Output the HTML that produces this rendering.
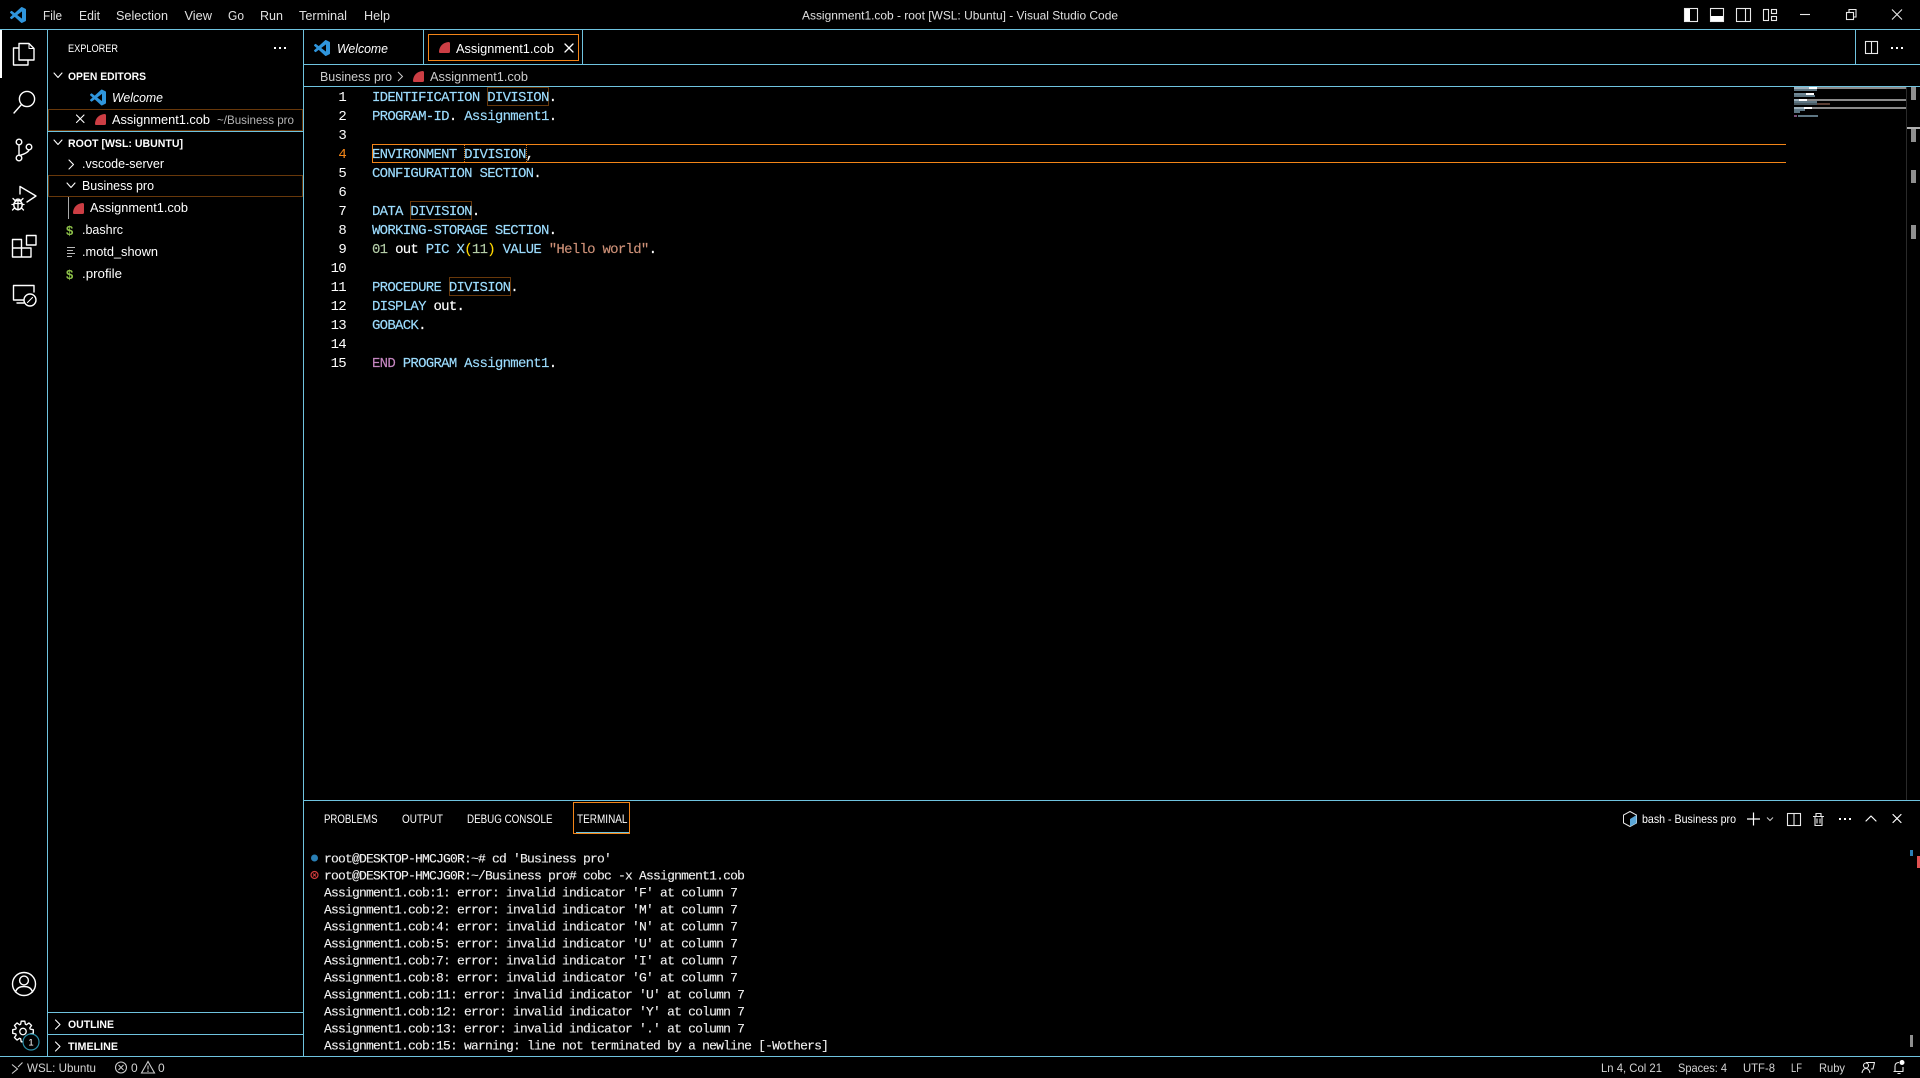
<!DOCTYPE html>
<html lang="en"><head><meta charset="utf-8"><title>Assignment1.cob - root [WSL: Ubuntu] - Visual Studio Code</title>
<style>
html,body{margin:0;padding:0;background:#000;width:1920px;height:1078px;overflow:hidden}
svg{display:block;position:absolute;left:0;top:0}
text{font-family:"Liberation Sans",sans-serif;font-size:13px;fill:#fff;white-space:pre}
.menu{fill:#e0e0e0}
.b{font-weight:700;font-size:11px}
.h{font-size:11px}
.i{font-style:italic}
.d{font-size:12px;fill:#b4b4b4}
.g{fill:#ccc}
.s{font-size:12px;fill:#d4d4d4}
.p{font-size:11.5px}
.m{font-family:"Liberation Mono",monospace;font-size:14px;letter-spacing:-.72px;fill:#9cdcfe;stroke:#9cdcfe;stroke-width:.15px}
.n{font-family:"Liberation Mono",monospace;font-size:14px;letter-spacing:-.72px;fill:#fff;text-anchor:end}
.t{font-family:"Liberation Mono",monospace;font-size:13px;letter-spacing:-.8px;fill:#f0f0f0;stroke:#f0f0f0;stroke-width:.12px}
.w{fill:#fff;stroke:#fff}.o{fill:#b5cea8;stroke:#b5cea8}.y{fill:#ffd700;stroke:#ffd700}.r{fill:#ce9178;stroke:#ce9178}.k{fill:#c586c0;stroke:#c586c0}
.ln{stroke:#6fc3df;stroke-width:1;fill:none}
.oc{stroke:#f38518;stroke-width:1;fill:none}
.dt{stroke:#f38518;stroke-width:1;fill:none;stroke-dasharray:1 1;stroke-opacity:.85}
.ic{stroke:#fff;stroke-width:1.4;fill:none;stroke-linejoin:round;stroke-linecap:round}
.ic2{stroke:#e8e8e8;stroke-width:1.1;fill:none}
</style></head><body>
<svg width="1920" height="1078" viewBox="0 0 1920 1078" xmlns="http://www.w3.org/2000/svg">
<defs>
<path id="vs" d="M23.15 2.587L18.21.21a1.494 1.494 0 0 0-1.705.29l-9.46 8.63-4.12-3.128a.999.999 0 0 0-1.276.057L.327 7.261A1 1 0 0 0 .326 8.74L3.899 12 .326 15.26a1 1 0 0 0 .001 1.479L1.65 17.94a.999.999 0 0 0 1.276.057l4.12-3.128 9.46 8.63a1.492 1.492 0 0 0 1.704.29l4.942-2.377A1.5 1.5 0 0 0 24 20.06V3.939a1.5 1.5 0 0 0-.85-1.352zm-5.146 14.861L10.826 12l7.178-5.448v10.896z" fill="#2f95dc"/>
<path id="cob" d="M0 10 C0 4.5 4 0.5 9.5 0 Q11 0 11 1.5 V9.5 Q11 11 9.5 11 H1 Q0 11 0 10Z" fill="#cc3e44"/>
</defs>

<!-- Title bar -->
<use href="#vs" transform="translate(10 7) scale(.667)"/>
<text class="menu" x="43" y="20" textLength="19" lengthAdjust="spacingAndGlyphs">File</text>
<text class="menu" x="79" y="20" textLength="21" lengthAdjust="spacingAndGlyphs">Edit</text>
<text class="menu" x="116" y="20" textLength="52" lengthAdjust="spacingAndGlyphs">Selection</text>
<text class="menu" x="184.5" y="20" textLength="27.5" lengthAdjust="spacingAndGlyphs">View</text>
<text class="menu" x="228" y="20" textLength="16" lengthAdjust="spacingAndGlyphs">Go</text>
<text class="menu" x="260" y="20" textLength="23" lengthAdjust="spacingAndGlyphs">Run</text>
<text class="menu" x="299" y="20" textLength="48" lengthAdjust="spacingAndGlyphs">Terminal</text>
<text class="menu" x="364" y="20" textLength="26" lengthAdjust="spacingAndGlyphs">Help</text>
<text class="menu" x="802" y="19.5" style="font-size:12px" textLength="316" lengthAdjust="spacingAndGlyphs">Assignment1.cob - root [WSL: Ubuntu] - Visual Studio Code</text>
<!-- layout controls -->
<g class="ic2">
<rect x="1684.5" y="8.5" width="13" height="13"/><rect x="1685" y="9" width="5" height="12" fill="#fff" stroke="none"/>
<rect x="1710.5" y="8.5" width="13" height="13"/><rect x="1711" y="16" width="12" height="5" fill="#fff" stroke="none"/>
<rect x="1736.5" y="8.5" width="14" height="13"/><path d="M1745.5 8.5V21.5"/>
<rect x="1763.5" y="9.5" width="5" height="11"/><rect x="1771.5" y="9.5" width="5" height="4"/><rect x="1771.5" y="16.5" width="5" height="4"/>
<path d="M1800 14.5H1810"/>
<rect x="1846.5" y="12.5" width="7" height="7"/><path d="M1849 12V9.5H1856V17H1854"/>
<path d="M1892 9.5L1902 19.5M1902 9.5L1892 19.5"/>
</g>

<!-- Main lines -->
<g class="ln">
<path d="M0 29.5H1920"/>
<path d="M47.5 30V1056"/>
<path d="M303.5 30V1056"/>
<path d="M304 64.5H1920"/>
<path d="M304 86.5H1920"/>
<path d="M423.5 30V64"/>
<path d="M582.5 30V64"/>
<path d="M1855.5 30V64"/>
<path d="M48 131.5H303"/>
<path d="M48 1012.5H303"/>
<path d="M48 1034.5H303"/>
<path d="M304 800.5H1920"/>
<path d="M0 1056.5H1920"/>
</g>

<!-- Activity bar -->
<rect x="0" y="30" width="2" height="48" fill="#fff"/>
<g class="ic">
<path d="M19 48H13.5V65H28V60H19V43.5H29L34 48.5V60H28"/><path d="M29 43.5V48.5H34" stroke-width="1"/>
<circle cx="27" cy="99" r="7.6"/><path d="M21.5 104.5L14 113"/>
<circle cx="19" cy="142" r="2.8"/><circle cx="29" cy="147" r="2.8"/><circle cx="19" cy="158" r="2.8"/><path d="M19 145V155M29 150Q28 153 19.5 155.5"/>
<path d="M20 194V186.5L36 196L27 202"/>
<path d="M15 200.5Q18 197.5 21 200.5" stroke-width="1.2"/><ellipse cx="18" cy="205" rx="4.2" ry="4.6" stroke-width="1.5"/><path d="M13 198.5L15 200.5M23 198.5L21 200.5M12 204.5H14M22 204.5H24M12.5 210L14.5 208M23.5 210L21.5 208M18 201V210M14 203.5H22" stroke-width="1.3"/>
<rect x="26.5" y="235.5" width="9.5" height="9.5"/><path d="M12.5 239.5H21.5V257M12.5 239.5V257H31V248H12.5"/>
<path d="M24 300H13.5V285.5H34V292M17 303H24"/><circle cx="30" cy="300" r="6"/><path d="M27.5 302.5L32.5 297.5" stroke-width="1.1"/>
<circle cx="24" cy="984" r="11.5"/><circle cx="24" cy="980.5" r="4.4"/><path d="M15.5 992Q17 986.5 24 986.5T32.5 992"/>
<g transform="translate(23 1031.5) scale(.95)">
<path d="M-2.47 -7.61L-1.91 -10.83H1.91L2.47 -7.61L3.63 -7.13L6.31 -9.01L9.01 -6.31L7.13 -3.63L7.61 -2.47L10.83 -1.91V1.91L7.61 2.47L7.13 3.63L9.01 6.31L6.31 9.01L3.63 7.13L2.47 7.61L1.91 10.83H-1.91L-2.47 7.61L-3.63 7.13L-6.31 9.01L-9.01 6.31L-7.13 3.63L-7.61 2.47L-10.83 1.91V-1.91L-7.61 -2.47L-7.13 -3.63L-9.01 -6.31L-6.31 -9.01L-3.63 -7.13Z"/>
<circle r="3.4"/></g>
</g>
<circle cx="31" cy="1042" r="8" fill="#000" stroke="#2b8fa8" stroke-width="1.2"/>
<text x="31" y="1045.5" text-anchor="middle" style="font-size:9.5px">1</text>

<!-- Explorer -->
<text class="h" x="68" y="52" textLength="50" lengthAdjust="spacingAndGlyphs">EXPLORER</text>
<g fill="#fff"><rect x="274" y="47" width="2" height="2"/><rect x="279" y="47" width="2" height="2"/><rect x="284" y="47" width="2" height="2"/></g>
<g class="ic" style="stroke-width:1.1">
<path d="M54 73L58 77.5L62 73"/>
<path d="M54 140L58 144.5L62 140"/>
<path d="M69 160L73.5 164.5L69 169"/>
<path d="M67 183L71 187.5L75 183"/>
<path d="M76.5 115L84 122.5M84 115L76.5 122.5"/>
<path d="M55.5 1020L60 1024.5L55.5 1029"/>
<path d="M55.5 1042L60 1046.5L55.5 1051"/>
</g>
<text class="b" x="68" y="80" textLength="78" lengthAdjust="spacingAndGlyphs">OPEN EDITORS</text>
<use href="#vs" transform="translate(90 89.5) scale(.667)"/>
<text class="i" x="112" y="102" textLength="51" lengthAdjust="spacingAndGlyphs">Welcome</text>
<rect class="dt" x="48.5" y="109.5" width="254" height="21"/>
<use href="#cob" x="95" y="114"/>
<text x="112" y="124" textLength="98" lengthAdjust="spacingAndGlyphs">Assignment1.cob</text>
<text class="d" x="217" y="124" textLength="77" lengthAdjust="spacingAndGlyphs">~/Business pro</text>
<text class="b" x="68" y="147" textLength="115" lengthAdjust="spacingAndGlyphs">ROOT [WSL: UBUNTU]</text>
<text x="82" y="168" textLength="82" lengthAdjust="spacingAndGlyphs">.vscode-server</text>
<rect class="dt" x="48.5" y="175.5" width="254" height="21"/>
<text x="82" y="190" textLength="72" lengthAdjust="spacingAndGlyphs">Business pro</text>
<path d="M68.5 197V219" stroke="#aaa" fill="none"/>
<use href="#cob" x="73" y="203"/>
<text x="90" y="212" textLength="98" lengthAdjust="spacingAndGlyphs">Assignment1.cob</text>
<text x="66" y="235" style="fill:#8dc149;font-weight:700;font-size:13px">$</text>
<text x="82" y="234" textLength="41" lengthAdjust="spacingAndGlyphs">.bashrc</text>
<path d="M67 247.5H75M67 250.5H73M67 253.5H75M67 256.5H72" stroke="#bbb" stroke-width="1.1"/>
<text x="82" y="256" textLength="76" lengthAdjust="spacingAndGlyphs">.motd_shown</text>
<text x="66" y="279" style="fill:#8dc149;font-weight:700;font-size:13px">$</text>
<text x="82" y="278" textLength="40" lengthAdjust="spacingAndGlyphs">.profile</text>
<text class="b" x="68" y="1028" textLength="46" lengthAdjust="spacingAndGlyphs">OUTLINE</text>
<text class="b" x="68" y="1050" textLength="50" lengthAdjust="spacingAndGlyphs">TIMELINE</text>

<!-- Tabs -->
<use href="#vs" transform="translate(314 40) scale(.667)"/>
<text class="i" x="337" y="53" textLength="51" lengthAdjust="spacingAndGlyphs">Welcome</text>
<rect class="oc" x="428.5" y="34.5" width="150" height="26"/>
<use href="#cob" x="439" y="42"/>
<text x="456" y="53" textLength="98" lengthAdjust="spacingAndGlyphs">Assignment1.cob</text>
<path class="ic" d="M565 44L573 52M573 44L565 52" style="stroke-width:1.3"/>
<g class="ic2"><rect x="1865.5" y="41.5" width="12" height="12"/><path d="M1871.5 41.5V53.5"/></g>
<g fill="#fff"><rect x="1891" y="47" width="2" height="2"/><rect x="1896" y="47" width="2" height="2"/><rect x="1901" y="47" width="2" height="2"/></g>

<!-- Breadcrumbs -->
<text class="g" x="320" y="81" textLength="72" lengthAdjust="spacingAndGlyphs">Business pro</text>
<path d="M398 72L402.5 76.5L398 81" stroke="#ccc" fill="none"/>
<use href="#cob" x="413" y="71"/>
<text class="g" x="430" y="81" textLength="98" lengthAdjust="spacingAndGlyphs">Assignment1.cob</text>

<!-- Editor gutter -->
<g>
<text class="n" x="346" y="101">1</text><text class="n" x="346" y="120">2</text><text class="n" x="346" y="139">3</text>
<text class="n" x="346" y="158" style="fill:#f38518">4</text><text class="n" x="346" y="177">5</text><text class="n" x="346" y="196">6</text>
<text class="n" x="346" y="215">7</text><text class="n" x="346" y="234">8</text><text class="n" x="346" y="253">9</text>
<text class="n" x="346" y="272">10</text><text class="n" x="346" y="291">11</text><text class="n" x="346" y="310">12</text>
<text class="n" x="346" y="329">13</text><text class="n" x="346" y="348">14</text><text class="n" x="346" y="367">15</text>
</g>
<!-- Highlights -->
<path class="oc" d="M1786 144.5H372.5V162.5H1786"/>
<rect class="dt" x="487.5" y="87.5" width="61" height="18"/>
<path class="dt" d="M464.5 145V162M526.5 145V162"/>
<rect class="dt" x="410.5" y="201.5" width="61" height="18"/>
<rect class="dt" x="449.5" y="277.5" width="61" height="18"/>
<!-- Code -->
<text class="m" x="372" y="101">IDENTIFICATION DIVISION<tspan class="w">.</tspan></text>
<text class="m" x="372" y="120">PROGRAM-ID<tspan class="w">.</tspan> Assignment1<tspan class="w">.</tspan></text>
<text class="m" x="372" y="158">ENVIRONMENT DIVISION<tspan class="w">,</tspan></text>
<text class="m" x="372" y="177">CONFIGURATION SECTION<tspan class="w">.</tspan></text>
<text class="m" x="372" y="215">DATA DIVISION<tspan class="w">.</tspan></text>
<text class="m" x="372" y="234">WORKING-STORAGE SECTION<tspan class="w">.</tspan></text>
<text class="m" x="372" y="253"><tspan class="o">01</tspan> <tspan class="w">out</tspan> PIC X<tspan class="y">(</tspan><tspan class="o">11</tspan><tspan class="y">)</tspan> VALUE <tspan class="r">"Hello world"</tspan><tspan class="w">.</tspan></text>
<text class="m" x="372" y="291">PROCEDURE DIVISION<tspan class="w">.</tspan></text>
<text class="m" x="372" y="310">DISPLAY <tspan class="w">out.</tspan></text>
<text class="m" x="372" y="329">GOBACK<tspan class="w">.</tspan></text>
<text class="m" x="372" y="367"><tspan class="k">END</tspan> PROGRAM Assignment1<tspan class="w">.</tspan></text>

<!-- Minimap -->
<g>
<rect x="1817" y="87" width="89" height="2" fill="#8a8a8a"/><rect x="1809" y="87" width="8" height="2" fill="#fff"/><rect x="1794" y="87" width="15" height="2" fill="#9db0bb"/>
<rect x="1794" y="89" width="23" height="2" fill="#5e7683"/>
<rect x="1794" y="93" width="12" height="2" fill="#6f8794"/><rect x="1806" y="93" width="8" height="2" fill="#fff"/>
<rect x="1794" y="95" width="21" height="2" fill="#5e7683"/>
<rect x="1807" y="99" width="99" height="2" fill="#8a8a8a"/><rect x="1799" y="99" width="8" height="2" fill="#fff"/><rect x="1794" y="99" width="5" height="2" fill="#9db0bb"/>
<rect x="1794" y="101" width="23" height="2" fill="#5e7683"/>
<rect x="1794" y="103" width="23" height="2" fill="#4a5a62"/><rect x="1817" y="103" width="13" height="2" fill="#5c3f34"/>
<rect x="1812" y="107" width="94" height="2" fill="#8a8a8a"/><rect x="1804" y="107" width="8" height="2" fill="#fff"/><rect x="1794" y="107" width="10" height="2" fill="#9db0bb"/>
<rect x="1794" y="109" width="11" height="2" fill="#5e7683"/><rect x="1794" y="111" width="6" height="2" fill="#5e7683"/>
<rect x="1794" y="115" width="3" height="2" fill="#7a4f7a"/><rect x="1798" y="115" width="20" height="2" fill="#5e7683"/>
</g>
<!-- Scrollbar -->
<path d="M1906.5 87V800" stroke="#2a2a2a"/>
<rect x="1911" y="87" width="5" height="13" fill="#8f8f8f"/>
<rect x="1907" y="127" width="13" height="2" fill="#b0b0b0"/>
<rect x="1911" y="129" width="5" height="13" fill="#8f8f8f"/>
<rect x="1911" y="170" width="5" height="13" fill="#8f8f8f"/>
<rect x="1911" y="225" width="5" height="14" fill="#8f8f8f"/>

<!-- Panel tabs -->
<text class="p" x="324" y="823" textLength="53.5" lengthAdjust="spacingAndGlyphs">PROBLEMS</text>
<text class="p" x="402" y="823" textLength="41" lengthAdjust="spacingAndGlyphs">OUTPUT</text>
<text class="p" x="467" y="823" textLength="85.5" lengthAdjust="spacingAndGlyphs">DEBUG CONSOLE</text>
<text class="p" x="577" y="823" textLength="50.5" lengthAdjust="spacingAndGlyphs">TERMINAL</text>
<rect class="oc" x="573.5" y="802.5" width="56" height="31"/>
<path d="M576 832.5H629" stroke="#6fc3df"/>
<!-- Panel actions -->
<path d="M1630 811.5L1636.5 815V823L1630 826.5L1623.5 823V815Z" fill="none" stroke="#e8e8e8"/><path d="M1630 819V826.5L1636.5 823V815Z" fill="#5aa5d5"/>
<text x="1642" y="823" style="font-size:12px" textLength="94" lengthAdjust="spacingAndGlyphs">bash - Business pro</text>
<path d="M1747 819H1760M1753.5 812.5V825.5" stroke="#fff" stroke-width="1.2" fill="none"/>
<path d="M1767 817.5L1770 820.5L1773 817.5" stroke="#ccc" fill="none"/>
<g class="ic2">
<rect x="1787.5" y="813.5" width="13" height="12"/><path d="M1794 813.5V825.5"/>
<path d="M1813 816.5H1824M1815 816.5V825.5H1822V816.5M1816 816V813.5H1821V816M1817 818.5V823.5M1820 818.5V823.5"/>
</g>
<g fill="#fff"><rect x="1839" y="818" width="2" height="2"/><rect x="1844" y="818" width="2" height="2"/><rect x="1849" y="818" width="2" height="2"/></g>
<path class="ic" d="M1866 821L1871 816L1876 821M1893 814.5L1901 822.5M1901 814.5L1893 822.5" style="stroke-width:1.2"/>

<!-- Terminal -->
<circle cx="314.5" cy="858" r="3.5" fill="#2a7fb5"/>
<circle cx="314.5" cy="875" r="3.5" fill="none" stroke="#d13b3b" stroke-width="1.2"/><path d="M313 873.5L316 876.5M316 873.5L313 876.5" stroke="#d13b3b"/>
<text class="t" x="324" y="862.5">root@DESKTOP-HMCJG0R:~# cd 'Business pro'</text>
<text class="t" x="324" y="879.5">root@DESKTOP-HMCJG0R:~/Business pro# cobc -x Assignment1.cob</text>
<text class="t" x="324" y="896.5">Assignment1.cob:1: error: invalid indicator 'F' at column 7</text>
<text class="t" x="324" y="913.5">Assignment1.cob:2: error: invalid indicator 'M' at column 7</text>
<text class="t" x="324" y="930.5">Assignment1.cob:4: error: invalid indicator 'N' at column 7</text>
<text class="t" x="324" y="947.5">Assignment1.cob:5: error: invalid indicator 'U' at column 7</text>
<text class="t" x="324" y="964.5">Assignment1.cob:7: error: invalid indicator 'I' at column 7</text>
<text class="t" x="324" y="981.5">Assignment1.cob:8: error: invalid indicator 'G' at column 7</text>
<text class="t" x="324" y="998.5">Assignment1.cob:11: error: invalid indicator 'U' at column 7</text>
<text class="t" x="324" y="1015.5">Assignment1.cob:12: error: invalid indicator 'Y' at column 7</text>
<text class="t" x="324" y="1032.5">Assignment1.cob:13: error: invalid indicator '.' at column 7</text>
<text class="t" x="324" y="1049.5">Assignment1.cob:15: warning: line not terminated by a newline [-Wothers]</text>
<rect x="1910" y="850" width="3" height="6" fill="#2a7fb5"/>
<rect x="1917" y="856" width="3" height="12" fill="#e05252"/>
<rect x="1910" y="1035" width="3" height="12" fill="#8f8f8f"/>

<!-- Status bar -->
<path d="M12 1064.5L17.5 1069L12 1073.5M22.5 1062.5L18 1067" stroke="#ccc" stroke-width="1.1" fill="none"/>
<text class="s" x="27" y="1072" textLength="69" lengthAdjust="spacingAndGlyphs">WSL: Ubuntu</text>
<circle cx="121" cy="1067.5" r="5.5" fill="none" stroke="#ccc" stroke-width="1.1"/><path d="M118.5 1065L123.5 1070M123.5 1065L118.5 1070" stroke="#ccc"/>
<text class="s" x="131" y="1072">0</text>
<path d="M148 1061.5L154.5 1073H141.5Z M148 1065.5V1069.5M148 1070.5V1072" fill="none" stroke="#ccc" stroke-width="1.1"/>
<text class="s" x="158" y="1072">0</text>
<text class="s" x="1601" y="1072" textLength="61" lengthAdjust="spacingAndGlyphs">Ln 4, Col 21</text>
<text class="s" x="1678" y="1072" textLength="49" lengthAdjust="spacingAndGlyphs">Spaces: 4</text>
<text class="s" x="1743" y="1072" textLength="32" lengthAdjust="spacingAndGlyphs">UTF-8</text>
<text class="s" x="1791" y="1072" textLength="11" lengthAdjust="spacingAndGlyphs">LF</text>
<text class="s" x="1819" y="1072" textLength="26" lengthAdjust="spacingAndGlyphs">Ruby</text>
<g class="ic2" stroke-linejoin="round">
<path d="M1866 1062.5H1874.5L1873 1069H1871"/><circle cx="1866" cy="1065.5" r="2.5"/><path d="M1862 1073Q1863 1068.5 1866 1068.5T1870 1073"/>
<path d="M1895 1071.5V1066.5Q1895 1062.5 1899 1062.5M1903 1067V1071.5H1893.5M1897.5 1073.5H1900.5"/>
</g>
<circle cx="1902" cy="1062.5" r="2.5" fill="#fff"/>
</svg>
</body></html>
